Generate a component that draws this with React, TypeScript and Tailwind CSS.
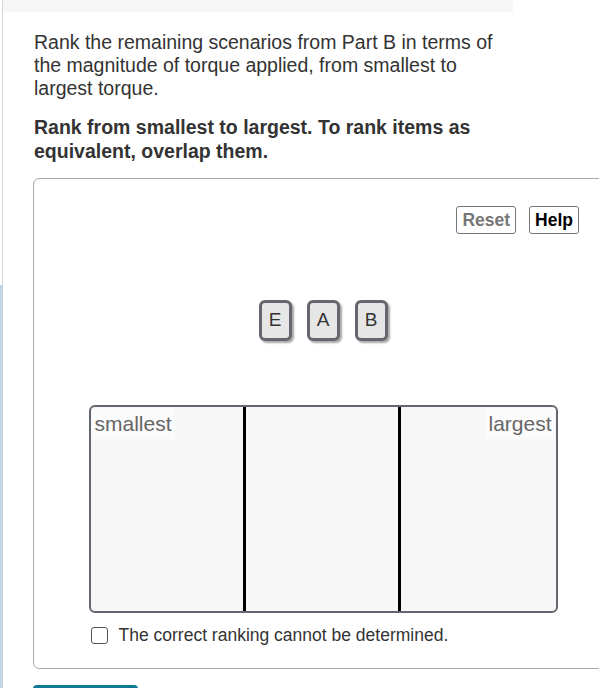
import React, { useState } from 'react'

const tiles = ['E', 'A', 'B']

export default function App() {
  const [cantDetermine, setCantDetermine] = useState(false)

  return (
    <div className="relative flex min-h-[688px] w-[599px] overflow-hidden bg-white" style={{ fontFamily: '"Liberation Sans", Arial, sans-serif' }}>
      {/* left rail */}
      <div className="flex w-[3px] shrink-0 flex-col">
        <div className="h-[285px] w-[3px] border-r border-[#cfdae5]" />
        <div className="flex-1 bg-[#c6d5e6]" />
      </div>

      <div className="flex flex-col">
        <div className="h-[12px] w-[510px] bg-[#f7f7f7]" />

        <div className="pl-[31px]">
          <p className="mt-[19px] w-[470px] text-[19.5px] leading-[23px] text-[#333]">
            Rank the remaining scenarios from Part B in terms of the magnitude of torque applied, from smallest to largest torque.
          </p>
          <p className="mt-[15px] w-[470px] text-[19.5px] font-bold leading-[24px] text-[#333]">
            Rank from smallest to largest. To rank items as equivalent, overlap them.
          </p>

          <div className="ml-[-1px] mt-[15px] flex h-[491px] w-[580px] flex-col items-center rounded-[6px] border border-[#aaa]">
            <div className="mt-[27px] flex w-full justify-end gap-[13px] pr-[33px]">
              <button className="h-[28px] rounded-[3px] border border-[#767676] px-[5px] text-[17.5px] font-bold text-[#777]">Reset</button>
              <button className="h-[28px] rounded-[3px] border border-[#767676] px-[5px] text-[17.5px] font-bold text-black">Help</button>
            </div>

            <div className="mt-[66px] flex gap-[15px]">
              {tiles.map((t) => (
                <div
                  key={t}
                  className="flex h-[41px] w-[33px] items-center justify-center rounded-[6px] border-[3px] border-[#666670] bg-[#e6e6e6] text-[19px] text-[#333] shadow-[2px_2px_2px_rgba(0,0,0,0.35)]"
                >
                  {t}
                </div>
              ))}
            </div>

            <div className="mt-[64px] grid h-[208px] w-[469px] grid-cols-3 rounded-[6px] border-2 border-[#666670] bg-[#f7f7f7]">
              <div className="border-r-[3px] border-black">
                <span className="ml-[1px] mt-[1px] inline-block bg-[#fbfbfb] px-[3px] py-[3px] text-[21px] leading-[25px] text-[#666]">smallest</span>
              </div>
              <div className="border-r-[3px] border-black" />
              <div className="flex justify-end">
                <span className="mr-[1px] mt-[1px] inline-block self-start bg-[#fbfbfb] px-[3px] py-[3px] text-[21px] leading-[25px] text-[#666]">largest</span>
              </div>
            </div>

            <label className="mt-[9px] flex w-[469px] items-center gap-[11px] pl-[2px]">
              <input
                type="checkbox"
                checked={cantDetermine}
                onChange={(e) => setCantDetermine(e.target.checked)}
                className="h-[17px] w-[17px] appearance-none rounded-[3px] border border-[#555] bg-white"
              />
              <span className="text-[17.5px] text-[#333]">The correct ranking cannot be determined.</span>
            </label>
          </div>

          <div className="ml-[-1px] mt-[16px] h-[10px] w-[105px] rounded-t-[4px] bg-[#0f7a94]" />
        </div>
      </div>
    </div>
  )
}
